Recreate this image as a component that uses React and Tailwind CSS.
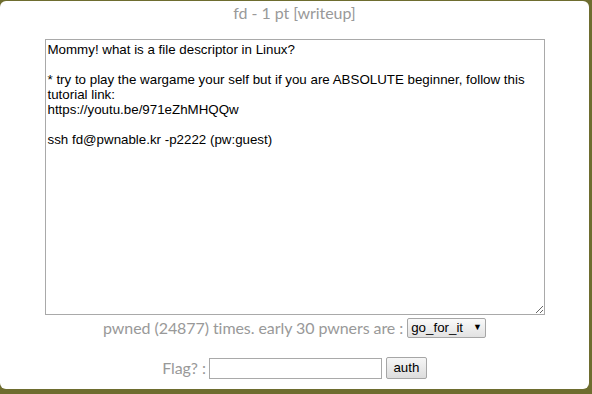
export default function App() {
  const text = `Mommy! what is a file descriptor in Linux?

* try to play the wargame your self but if you are ABSOLUTE beginner, follow this tutorial link:
https://youtu.be/971eZhMHQQw

ssh fd@pwnable.kr -p2222 (pw:guest)`;
  return (
    <div className="w-[592px] h-[394px] bg-[#6e6d2f] pt-[1px] pr-[3px] pb-[5px] overflow-hidden">
      <div className="h-full bg-white rounded-[6px] flex flex-col items-center font-['Lato',sans-serif] font-normal tracking-[-0.07px] text-[#999999]">
        <div className="h-[24px] leading-[24px] text-[16px]">fd - 1 pt [writeup]</div>
        <textarea
          readOnly
          defaultValue={text}
          className="mt-[14px] w-[500px] h-[276px] border border-[#a9a9a9] p-[2px] font-['Liberation_Sans',Arial,sans-serif] tracking-normal text-[13.333px] leading-[15px] text-black outline-none resize"
        />
        <div className="mt-[3px] h-[20px] flex items-center text-[16px]">
          <span className="mr-[4px]">pwned (24877) times. early 30 pwners are :</span>
          <span className="h-[20px] px-[3px] flex items-center gap-[10px] border border-[#a6a6a6] rounded-[2px] bg-gradient-to-b from-[#fafafa] to-[#e2e2e2] text-black font-['Liberation_Sans',Arial,sans-serif] tracking-normal text-[13.333px]">
            <span>go_for_it</span>
            <span className="text-[9px]">▼</span>
          </span>
        </div>
        <div className="mt-[19px] h-[22px] flex items-center text-[16px]">
          <span className="mr-[3px]">Flag? :</span>
          <input className="w-[173px] h-[21px] border border-[#a9a9a9] outline-none" />
          <button className="ml-[4px] w-[41px] h-[22px] border border-[#a6a6a6] rounded-[2px] bg-gradient-to-b from-[#f6f6f6] to-[#dddddd] text-black font-['Liberation_Sans',Arial,sans-serif] tracking-normal text-[13.333px]">
            auth
          </button>
        </div>
      </div>
    </div>
  );
}
